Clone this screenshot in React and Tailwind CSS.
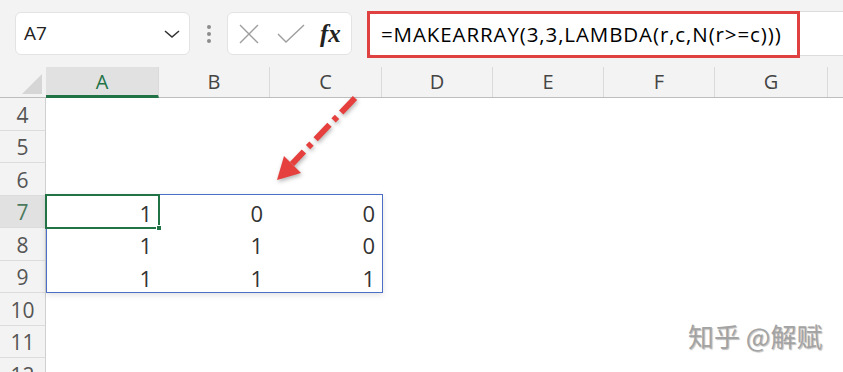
import React from "react";

const cols = [
  { name: "A", w: "w-[113px]" },
  { name: "B", w: "w-[111px]" },
  { name: "C", w: "w-[112px]" },
  { name: "D", w: "w-[111px]" },
  { name: "E", w: "w-[111px]" },
  { name: "F", w: "w-[111px]" },
  { name: "G", w: "w-[113px]" },
];

const rows = [
  { n: 4, vals: [] },
  { n: 5, vals: [] },
  { n: 6, vals: [] },
  { n: 7, vals: [1, 0, 0] },
  { n: 8, vals: [1, 1, 0] },
  { n: 9, vals: [1, 1, 1] },
  { n: 10, vals: [] },
  { n: 11, vals: [] },
  { n: 12, vals: [] },
];

const ui = { fontFamily: '"Open Sans", "Noto Sans", sans-serif' };

const Toolbar = () => (
  <div className="h-[67px] bg-[#f3f3f3] flex items-center">
    <div className="ml-[15px] w-[175px] h-[43px] bg-white rounded-md border border-[#e3e3e3] flex items-center justify-between pl-[8px] pr-[8px]">
      <span className="text-[19px] text-[#222]">A7</span>
      <svg width="18" height="10" viewBox="0 0 18 10" fill="none">
        <path d="M2 2l7 6 7-6" stroke="#333" strokeWidth="1.6" />
      </svg>
    </div>
    <div className="w-[37px] flex flex-col items-center gap-[3px]">
      <span className="w-[4px] h-[4px] rounded-full bg-[#8c8c8c]" />
      <span className="w-[4px] h-[4px] rounded-full bg-[#8c8c8c]" />
      <span className="w-[4px] h-[4px] rounded-full bg-[#8c8c8c]" />
    </div>
    <div className="w-[125px] h-[43px] bg-white rounded-md border border-[#e3e3e3] flex items-center pl-[10px]">
      <svg width="22" height="22" viewBox="0 0 22 22" fill="none">
        <path d="M2 2l18 18M20 2L2 20" stroke="#9e9e9e" strokeWidth="1.4" />
      </svg>
      <svg className="ml-[17px]" width="28" height="20" viewBox="0 0 28 20" fill="none">
        <path d="M1 10l8 8L27 1" stroke="#9e9e9e" strokeWidth="1.4" />
      </svg>
      <span
        className="ml-[15px] text-[25px] italic font-bold text-[#222] leading-none"
        style={{ fontFamily: '"Liberation Serif", serif' }}
      >
        fx
      </span>
    </div>
    <div className="ml-[15px] flex-1 h-[45px] bg-white border border-[#dcdcdc] rounded-l-md -mr-2">
      <div className="w-[433px] h-[47px] -mt-[1px] -ml-[1px] border-[3px] border-[#df4040] flex items-center pl-[11px]">
        <span className="text-[20.5px] text-black tracking-[0.9px] whitespace-nowrap">
          =MAKEARRAY(3,3,LAMBDA(r,c,N(r&gt;=c)))
        </span>
      </div>
    </div>
  </div>
);

const Sheet = () => (
  <div>
    <div className="flex h-[31px] bg-[#f3f3f3] border-b border-[#bdbdbd]">
      <div className="w-[46px] relative">
        <div className="absolute right-[4px] bottom-[3px] w-0 h-0 border-l-[20px] border-l-transparent border-b-[20px] border-b-[#d6d6d6]" />
      </div>
      {cols.map((c, i) => (
        <div
          key={c.name}
          className={`${c.w} flex items-center justify-center text-[20px] border-r border-[#dadada] ${
            i === 0 ? "bg-[#e1e1e1] text-[#217346] border-b-[3px] border-b-[#217346] -mb-[1px] pt-[2px]" : "text-[#444]"
          }`}
        >
          {c.name}
        </div>
      ))}
      <div className="flex-1" />
    </div>
    {rows.map((r) => (
      <div key={r.n} className="flex h-[32.5px]">
        <div
          className={`w-[46px] flex items-center justify-center pt-[3px] text-[21px] border-b border-[#dcdcdc] border-r border-r-[#cfcfcf] ${
            r.n === 7 ? "bg-[#e1e1e1] text-[#4d7a5e]" : "bg-[#f3f3f3] text-[#555]"
          }`}
        >
          {r.n}
        </div>
        {cols.map((c, i) => (
          <div key={c.name} className={`${c.w} flex items-center justify-end pr-[7px] pt-[3px] text-[22px] text-[#333]`}>
            {r.vals[i] !== undefined ? r.vals[i] : ""}
          </div>
        ))}
      </div>
    ))}
  </div>
);

export default function App() {
  return (
    <div className="w-[843px] h-[372px] overflow-hidden relative bg-white" style={ui}>
      <Toolbar />
      <Sheet />
      {/* spill range */}
      <div className="absolute left-[46px] top-[194px] w-[337px] h-[99px] border border-[#4a6fc4] shadow-[0_2px_6px_rgba(0,0,0,0.12)] pointer-events-none" />
      {/* active cell */}
      <div className="absolute left-[45px] top-[194px] w-[115px] h-[35px] border-2 border-[#217346] pointer-events-none">
        <div className="absolute -right-[4px] -bottom-[4px] w-[6px] h-[6px] bg-[#217346] border border-white" />
      </div>
      {/* arrow */}
      <svg className="absolute left-0 top-0 pointer-events-none drop-shadow-[1px_2px_2px_rgba(0,0,0,0.3)]" width="843" height="372">
        <path d="M355 98L292 164" stroke="#e5403d" strokeWidth="6" strokeDasharray="20 6 5 6" />
        <path d="M277 180L284 156L301 173Z" fill="#e5403d" />
      </svg>
      {/* watermark */}
      <div
        className="absolute left-[688px] top-[316px] text-[26px] text-[#a3a3a3] whitespace-nowrap [text-shadow:1px_1px_1px_rgba(0,0,0,0.25)]"
        style={{ fontFamily: '"Noto Sans CJK SC", sans-serif' }}
      >
        知乎 @解赋
      </div>
    </div>
  );
}
